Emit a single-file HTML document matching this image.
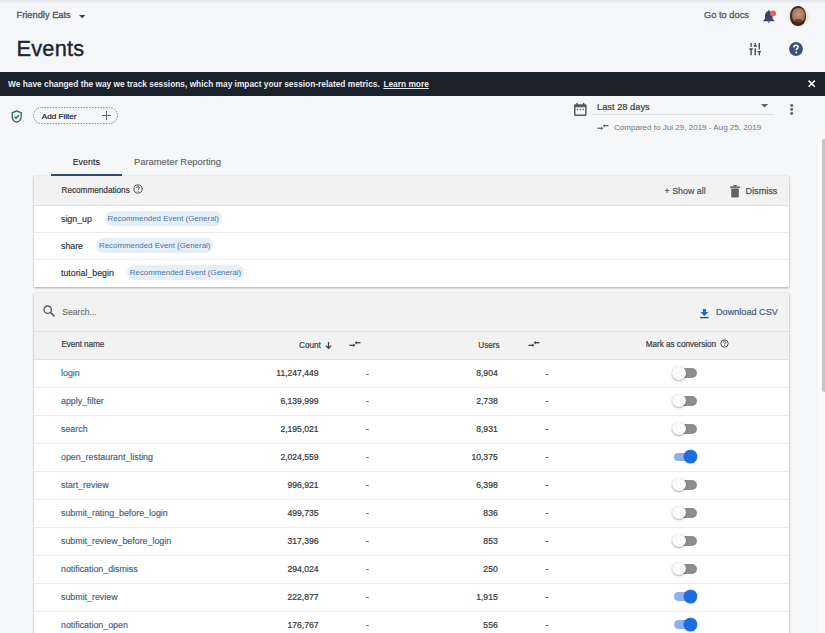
<!DOCTYPE html>
<html><head><meta charset="utf-8">
<style>
*{box-sizing:border-box;margin:0;padding:0}
html,body{width:825px;height:633px;overflow:hidden}
body{background:#f5f6f8;font-family:"Liberation Sans",sans-serif;position:relative;color:#3c4043}
.a{position:absolute;white-space:nowrap;line-height:1}
svg.a{overflow:visible}
.card{position:absolute;background:#fff;box-shadow:0 1px 2px rgba(0,0,0,.28),0 0 1px rgba(0,0,0,.18)}
.hdr{position:absolute;left:0;width:755px;background:#f2f2f2}
.row{position:absolute;left:0;width:755px;height:1px;background:#ebebeb}
.ev{position:absolute;left:27px;font-size:8.85px;line-height:1;color:#42607e;white-space:nowrap;-webkit-text-stroke:0.15px #42607e}
.rn{position:absolute;left:27px;font-size:8.8px;line-height:1;color:#2b2f33;white-space:nowrap;-webkit-text-stroke:0.15px #2b2f33}
.num{position:absolute;font-size:8.6px;line-height:1;color:#35393d;text-align:right;white-space:nowrap}
.dash{position:absolute;font-size:8.5px;line-height:1;color:#55595d;-webkit-text-stroke:0.3px #55595d}
.tog{position:absolute;left:638px;width:26px;height:14px}
.tog .tr{position:absolute;left:1px;top:2px;width:24px;height:10px;border-radius:5px;background:#8e8e8e}
.tog .kn{position:absolute;left:0;top:0;width:13.5px;height:13.5px;border-radius:50%;background:#fbfbfb;box-shadow:0 1px 2px rgba(0,0,0,.3),0 0 1px rgba(0,0,0,.2)}
.tog.on .tr{top:2.7px;height:8.4px;left:1.5px;width:22px;background:#8db1ee}
.tog.on .kn{left:12.3px;top:0.3px;width:12.8px;height:12.8px;background:#1b6ee0;box-shadow:0 0 0 .4px rgba(10,60,140,.5),0 1px 1.5px rgba(0,0,0,.2)}
.chip{position:absolute;height:15px;border-radius:8px;background:#e5eff9;color:#4c769c;font-size:7.9px;line-height:15px;padding:0 3px;white-space:nowrap}
.st{-webkit-text-stroke:0.2px currentColor}
.hd{font-size:8.2px;color:#3c4043;-webkit-text-stroke:0.2px #3c4043}
.num{-webkit-text-stroke:0.22px #35393d}
</style></head><body>
<div class="a" style="left:0;top:0;width:825px;height:4px;background:linear-gradient(#e4e4e6,#f5f6f8)"></div>
<div class="a" style="left:16.5px;top:11.3px;font-size:9.3px;color:#55595e;-webkit-text-stroke:0.35px #55595e">Friendly Eats</div>
<svg class="a" style="left:79px;top:14.5px" width="6.4" height="3.2" viewBox="0 0 6.4 3.2"><path d="M0 0h6.4L3.2 3.2z" fill="#3c4043"/></svg>
<div class="a" style="left:16.5px;top:37.5px;font-size:21.8px;color:#1d2630;letter-spacing:0.2px;-webkit-text-stroke:0.4px #1d2630">Events</div>
<div class="a" style="left:704px;top:11.3px;font-size:9.3px;color:#55595e;-webkit-text-stroke:0.3px #55595e">Go to docs</div>
<svg class="a" style="left:762px;top:9px" width="15" height="15" viewBox="0 0 15 15">
<path d="M6.8 1.2c-.6 0-1 .5-1.1 1C3.9 2.9 3 4.6 3 6.6v3.1L1.3 11.5v.7h11v-.7L10.6 9.7V6.6c0-2-.9-3.7-2.7-4.4-.1-.5-.5-1-1.1-1z" fill="#394862"/>
<path d="M5.5 12.6h2.6L6.8 14z" fill="#394862"/>
<circle cx="11" cy="4.4" r="3" fill="#e0626c"/>
</svg>
<div class="a" style="left:788px;top:5.5px;width:21px;height:21px;border-radius:50%;background:#ece6df"></div>
<div class="a" style="left:790.3px;top:6px;width:15.8px;height:20px;border-radius:48% 48% 45% 45%;background:#3b2b23"></div>
<div class="a" style="left:791.6px;top:8px;width:13px;height:14px;border-radius:45% 45% 40% 40%;background:radial-gradient(ellipse at 50% 45%,#c29a80 0,#a57a62 55%,#6e4d3d 100%)"></div>
<div class="a" style="left:794.5px;top:18.5px;width:7px;height:5px;border-radius:40%;background:#4a3128;opacity:.7"></div>
<svg class="a" style="left:748.6px;top:42.7px" width="13" height="12.3" viewBox="0 0 13 12.3" fill="#45494d">
<rect x="1.4" y="0" width="1.4" height="3.8"/><path d="M.2 5.3h3.8l-.6 1.6H.8z"/><rect x="1.4" y="6.5" width="1.4" height="5.8"/>
<rect x="5.5" y="0" width="1.4" height="1.8"/><path d="M5.2 1.8h2L8.1 3.8H4.3z"/><rect x="5.5" y="5.3" width="1.4" height="7"/>
<rect x="9.6" y="0" width="1.4" height="6.5"/><path d="M8.4 8h3.8l-.6 1.6H9z"/><rect x="9.6" y="9.4" width="1.4" height="2.9"/>
</svg>
<svg class="a" style="left:789px;top:41.7px" width="14" height="14" viewBox="0 0 14 14">
<circle cx="7" cy="7" r="6.9" fill="#3e5272"/>
<path d="M4.9 5.4c0-1.2.9-2.1 2.1-2.1s2.1.8 2.1 1.9c0 1.5-1.9 1.5-1.9 3.1" stroke="#fff" stroke-width="1.5" fill="none"/>
<circle cx="7.2" cy="10.4" r="0.95" fill="#fff"/>
</svg>
<div class="a" style="left:0;top:71.7px;width:825px;height:24px;background:#1b222c"></div>
<div class="a" style="left:8px;top:79.8px;font-size:8.35px;font-weight:bold;color:#e9ebee">We have changed the way we track sessions, which may impact your session-related metrics. <span style="text-decoration:underline;margin-left:1.3px">Learn more</span></div>
<svg class="a" style="left:807.8px;top:80.1px" width="7.4" height="7.4" viewBox="0 0 7.4 7.4"><path d="M.6 .6L6.8 6.8M6.8 .6L.6 6.8" stroke="#fff" stroke-width="1.5"/></svg>
<svg class="a" style="left:10.5px;top:109.5px" width="12" height="13" viewBox="0 0 12 13">
<path d="M5.7 .9L1.2 2.8v3.4c0 2.9 1.9 5.3 4.5 6 2.6-.7 4.5-3.1 4.5-6V2.8z" fill="#e9f6f1" stroke="#2e6a5a" stroke-width="1.3"/>
<path d="M3.4 6.6l1.6 1.6 2.9-3" fill="none" stroke="#2e6a5a" stroke-width="1.3"/>
</svg>
<svg class="a" style="left:32.5px;top:107.3px" width="85" height="17" viewBox="0 0 85 17"><rect x=".5" y=".5" width="84" height="16" rx="8" fill="none" stroke="#8a8f94" stroke-width="1" stroke-dasharray="1.6 1.2"/></svg>
<div class="a st" style="left:41.8px;top:112.7px;font-size:8.1px;color:#202124">Add Filter</div>
<svg class="a" style="left:102px;top:111px" width="9" height="9" viewBox="0 0 9 9"><path d="M4.5 0v9M0 4.5h9" stroke="#5f6368" stroke-width="1"/></svg>
<svg class="a" style="left:574.2px;top:102.6px" width="12.6" height="13" viewBox="0 0 12.6 13" fill="#55595e">
<rect x="2.2" y="0" width="1.5" height="2"/><rect x="8.9" y="0" width="1.5" height="2"/>
<path d="M1.2 1.3h10.2c.7 0 1.2.5 1.2 1.2v9.3c0 .7-.5 1.2-1.2 1.2H1.2C.5 13 0 12.5 0 11.8V2.5c0-.7.5-1.2 1.2-1.2zM1.5 4.3v7.2h9.6V4.3z"/>
<circle cx="3.3" cy="6.6" r=".75"/><circle cx="6.3" cy="6.6" r=".75"/><circle cx="9.3" cy="6.6" r=".75"/>
</svg>
<div class="a st" style="left:597px;top:102.5px;font-size:9.3px;color:#3c4043">Last 28 days</div>
<svg class="a" style="left:761px;top:104.3px" width="7.2" height="3.6" viewBox="0 0 7.2 3.6"><path d="M0 0h7.2L3.6 3.6z" fill="#5f6368"/></svg>
<div class="a" style="left:592px;top:113.6px;width:182px;height:1px;background:#dcdee2"></div>
<svg class="a" style="left:790.2px;top:104px" width="3.4" height="11" viewBox="0 0 3.4 11" fill="#5f6368"><circle cx="1.7" cy="1.6" r="1.5"/><circle cx="1.7" cy="5.5" r="1.5"/><circle cx="1.7" cy="9.4" r="1.5"/></svg>
<svg class="a" style="left:597px;top:123.5px" width="12" height="7" viewBox="0 0 12 7"><path d="M0.5 4.3h4.2" stroke="#5f6368" stroke-width="1.3"/><path d="M4.2 2.6L6.4 4.3 4.2 6z" fill="#5f6368"/><path d="M11.5 1.7H7.3" stroke="#5f6368" stroke-width="1.3"/><path d="M7.8 0L5.6 1.7 7.8 3.4z" fill="#5f6368"/></svg>
<div class="a" style="left:614px;top:124.3px;font-size:8.05px;color:#72777c">Compared to Jul 29, 2019 - Aug 25, 2019</div>
<div class="a" style="left:72.7px;top:157.7px;font-size:8.9px;color:#202124;-webkit-text-stroke:0.1px #202124">Events</div>
<div class="a" style="left:51px;top:173.8px;width:70.6px;height:2px;background:#34506e"></div>
<div class="a" style="left:134px;top:157.3px;font-size:9.4px;color:#626669;-webkit-text-stroke:0.15px #626669">Parameter Reporting</div>
<div class="card" style="left:34px;top:176px;width:755px;height:110.5px">
<div class="hdr" style="top:0;height:29px"></div><div class="row" style="top:28.5px;background:#e2e2e2"></div>
<div class="a st" style="left:27.5px;top:10.5px;font-size:8.2px;color:#3c4043">Recommendations</div>
<svg class="a" style="left:99px;top:8.3px" width="10" height="10" viewBox="0 0 10 10"><circle cx="5" cy="5" r="4.1" fill="none" stroke="#4a4e52" stroke-width="1"/><path d="M3.6 4c0-.85.6-1.4 1.4-1.4s1.4.55 1.4 1.3c0 1-1.3 1-1.3 2" stroke="#4a4e52" stroke-width="1" fill="none"/><circle cx="5.1" cy="7.3" r=".6" fill="#4a4e52"/></svg>
<div class="a" style="left:630.5px;top:11px;font-size:8.9px;color:#4f5357;-webkit-text-stroke:0.2px #4f5357">+ Show all</div>
<svg class="a" style="left:696.2px;top:9.3px" width="10" height="12.5" viewBox="0 0 10 12.5" fill="#5f6368"><rect x="0" y="1.4" width="10" height="1.5"/><rect x="3.3" y="0" width="3.4" height="1.6"/><path d="M1.2 3.4h7.6v8.2c0 .5-.4.9-.9.9H2.1c-.5 0-.9-.4-.9-.9z"/></svg>
<div class="a" style="left:711.5px;top:11px;font-size:9.1px;color:#4f5357;-webkit-text-stroke:0.25px #4f5357">Dismiss</div>
<div class="rn" style="top:39.0px">sign_up</div>
<div class="chip" style="left:70.5px;top:35.2px">Recommended Event (General)</div>
<div class="row" style="top:56.0px"></div>
<div class="rn" style="top:66.0px">share</div>
<div class="chip" style="left:62px;top:62.2px">Recommended Event (General)</div>
<div class="row" style="top:83.0px"></div>
<div class="rn" style="top:93.0px">tutorial_begin</div>
<div class="chip" style="left:92.8px;top:89.2px">Recommended Event (General)</div>
</div>
<div class="card" style="left:34px;top:293px;width:755px;height:360px">
<div class="hdr" style="top:0;height:66px"></div>
<svg class="a" style="left:8.8px;top:12.4px" width="12" height="12" viewBox="0 0 12 12"><circle cx="4.7" cy="4.7" r="3.7" fill="none" stroke="#55595e" stroke-width="1.3"/><path d="M7.4 7.4L11.5 11.5" stroke="#55595e" stroke-width="1.6"/></svg>
<div class="a" style="left:28.3px;top:14.5px;font-size:8.6px;color:#6e7377;-webkit-text-stroke:0.15px #6e7377">Search...</div>
<svg class="a" style="left:666.2px;top:15.5px" width="8.8" height="9.3" viewBox="0 0 8.8 9.3"><path d="M2.9 0h3v3h2.6L4.4 7.1.3 3h2.6z" fill="#2466c6"/><rect x="0.2" y="7.9" width="8.4" height="1.4" fill="#3a4f6a"/></svg>
<div class="a st" style="left:682px;top:14.5px;font-size:9.15px;color:#44607b">Download CSV</div>
<div class="row" style="top:37.5px;background:#e3e3e3"></div>
<div class="a hd" style="left:27.4px;top:47.5px;letter-spacing:-0.1px">Event name</div>
<div class="a hd" style="left:265px;top:49.1px">Count</div>
<svg class="a" style="left:290.5px;top:48.6px" width="7" height="7" viewBox="0 0 7 7"><path d="M3.5 0v6.3M.8 3.6l2.7 2.7 2.7-2.7" stroke="#3c4043" stroke-width="1.3" fill="none"/></svg>
<svg class="a" style="left:315px;top:48px" width="12" height="7" viewBox="0 0 12 7"><path d="M0.5 4.3h4.2" stroke="#3c4043" stroke-width="1.3"/><path d="M4.2 2.6L6.4 4.3 4.2 6z" fill="#3c4043"/><path d="M11.5 1.7H7.3" stroke="#3c4043" stroke-width="1.3"/><path d="M7.8 0L5.6 1.7 7.8 3.4z" fill="#3c4043"/></svg>
<div class="a hd" style="left:444.3px;top:49.3px">Users</div>
<svg class="a" style="left:494px;top:48px" width="12" height="7" viewBox="0 0 12 7"><path d="M0.5 4.3h4.2" stroke="#3c4043" stroke-width="1.3"/><path d="M4.2 2.6L6.4 4.3 4.2 6z" fill="#3c4043"/><path d="M11.5 1.7H7.3" stroke="#3c4043" stroke-width="1.3"/><path d="M7.8 0L5.6 1.7 7.8 3.4z" fill="#3c4043"/></svg>
<div class="a hd" style="left:611.7px;top:47.8px;letter-spacing:-0.03px">Mark as conversion</div>
<svg class="a" style="left:686.4px;top:46.4px" width="9" height="9" viewBox="0 0 10 10"><circle cx="5" cy="5" r="4.1" fill="none" stroke="#3c4043" stroke-width="1"/><path d="M3.6 4c0-.85.6-1.4 1.4-1.4s1.4.55 1.4 1.3c0 1-1.3 1-1.3 2" stroke="#3c4043" stroke-width="1" fill="none"/><circle cx="5.1" cy="7.3" r=".6" fill="#3c4043"/></svg>
<div class="row" style="top:65.5px;background:#e2e2e2"></div>
<div class="ev" style="top:76.00px">login</div>
<div class="num" style="right:470.4px;top:76.20px">11,247,449</div>
<div class="dash" style="left:332px;top:76.50px">-</div>
<div class="num" style="right:291.3px;top:76.20px">8,904</div>
<div class="dash" style="left:511.5px;top:76.50px">-</div>
<div class="tog" style="top:73.00px"><div class="tr"></div><div class="kn"></div></div>
<div class="row" style="top:93.95px"></div>
<div class="ev" style="top:103.95px">apply_filter</div>
<div class="num" style="right:470.4px;top:104.15px">6,139,999</div>
<div class="dash" style="left:332px;top:104.45px">-</div>
<div class="num" style="right:291.3px;top:104.15px">2,738</div>
<div class="dash" style="left:511.5px;top:104.45px">-</div>
<div class="tog" style="top:100.95px"><div class="tr"></div><div class="kn"></div></div>
<div class="row" style="top:121.90px"></div>
<div class="ev" style="top:131.90px">search</div>
<div class="num" style="right:470.4px;top:132.10px">2,195,021</div>
<div class="dash" style="left:332px;top:132.40px">-</div>
<div class="num" style="right:291.3px;top:132.10px">8,931</div>
<div class="dash" style="left:511.5px;top:132.40px">-</div>
<div class="tog" style="top:128.90px"><div class="tr"></div><div class="kn"></div></div>
<div class="row" style="top:149.85px"></div>
<div class="ev" style="top:159.85px">open_restaurant_listing</div>
<div class="num" style="right:470.4px;top:160.05px">2,024,559</div>
<div class="dash" style="left:332px;top:160.35px">-</div>
<div class="num" style="right:291.3px;top:160.05px">10,375</div>
<div class="dash" style="left:511.5px;top:160.35px">-</div>
<div class="tog on" style="top:156.85px"><div class="tr"></div><div class="kn"></div></div>
<div class="row" style="top:177.80px"></div>
<div class="ev" style="top:187.80px">start_review</div>
<div class="num" style="right:470.4px;top:188.00px">996,921</div>
<div class="dash" style="left:332px;top:188.30px">-</div>
<div class="num" style="right:291.3px;top:188.00px">6,398</div>
<div class="dash" style="left:511.5px;top:188.30px">-</div>
<div class="tog" style="top:184.80px"><div class="tr"></div><div class="kn"></div></div>
<div class="row" style="top:205.75px"></div>
<div class="ev" style="top:215.75px">submit_rating_before_login</div>
<div class="num" style="right:470.4px;top:215.95px">499,735</div>
<div class="dash" style="left:332px;top:216.25px">-</div>
<div class="num" style="right:291.3px;top:215.95px">836</div>
<div class="dash" style="left:511.5px;top:216.25px">-</div>
<div class="tog" style="top:212.75px"><div class="tr"></div><div class="kn"></div></div>
<div class="row" style="top:233.70px"></div>
<div class="ev" style="top:243.70px">submit_review_before_login</div>
<div class="num" style="right:470.4px;top:243.90px">317,396</div>
<div class="dash" style="left:332px;top:244.20px">-</div>
<div class="num" style="right:291.3px;top:243.90px">853</div>
<div class="dash" style="left:511.5px;top:244.20px">-</div>
<div class="tog" style="top:240.70px"><div class="tr"></div><div class="kn"></div></div>
<div class="row" style="top:261.65px"></div>
<div class="ev" style="top:271.65px">notification_dismiss</div>
<div class="num" style="right:470.4px;top:271.85px">294,024</div>
<div class="dash" style="left:332px;top:272.15px">-</div>
<div class="num" style="right:291.3px;top:271.85px">250</div>
<div class="dash" style="left:511.5px;top:272.15px">-</div>
<div class="tog" style="top:268.65px"><div class="tr"></div><div class="kn"></div></div>
<div class="row" style="top:289.60px"></div>
<div class="ev" style="top:299.60px">submit_review</div>
<div class="num" style="right:470.4px;top:299.80px">222,877</div>
<div class="dash" style="left:332px;top:300.10px">-</div>
<div class="num" style="right:291.3px;top:299.80px">1,915</div>
<div class="dash" style="left:511.5px;top:300.10px">-</div>
<div class="tog on" style="top:296.60px"><div class="tr"></div><div class="kn"></div></div>
<div class="row" style="top:317.55px"></div>
<div class="ev" style="top:327.55px">notification_open</div>
<div class="num" style="right:470.4px;top:327.75px">176,767</div>
<div class="dash" style="left:332px;top:328.05px">-</div>
<div class="num" style="right:291.3px;top:327.75px">556</div>
<div class="dash" style="left:511.5px;top:328.05px">-</div>
<div class="tog on" style="top:324.55px"><div class="tr"></div><div class="kn"></div></div>
</div>
<div class="a" style="left:817.5px;top:136px;width:8px;height:497px;background:#fafafa"></div>
<div class="a" style="left:822px;top:139px;width:5px;height:253px;background:#c4c4c4;border-radius:2px"></div>
</body></html>
